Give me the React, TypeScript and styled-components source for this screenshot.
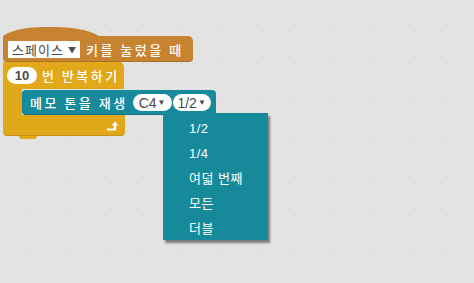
import React from "react";
import styled, { createGlobalStyle } from "styled-components";

const Global = createGlobalStyle`
  html, body { margin: 0; padding: 0; }
  body {
    width: 474px;
    height: 283px;
    overflow: hidden;
    background-color: #e3e3e3;
    background-image: radial-gradient(circle, #d9d9d9 1px, transparent 1.2px);
    background-size: 38px 38px;
    background-position: 10px 6px;
    font-family: "Liberation Sans", "Noto Sans CJK KR", sans-serif;
  }
`;

const Canvas = styled.div`
  position: relative;
  width: 474px;
  height: 283px;
`;

const Script = styled.div`
  display: flex;
  flex-direction: column;
  align-items: flex-start;
  padding: 27px 0 0 3px;
`;

const Label = styled.span`
  color: #fff;
  font-size: 13px;
  letter-spacing: 2.5px;
  white-space: nowrap;
  font-family: "Noto Sans CJK KR", "Liberation Sans", sans-serif;
  font-weight: 500;
`;

const HatWrap = styled.div`
  display: flex;
  flex-direction: column;
  position: relative;
  z-index: 2;
`;

const HatCap = styled.svg`
  display: block;
`;

const HatBody = styled.div`
  width: 190px;
  height: 26px;
  box-sizing: border-box;
  background: #c88330;
  border-radius: 0 5px 4px 4px;
  display: flex;
  align-items: center;
  gap: 6px;
  padding-left: 5px;
  box-shadow: inset 0 -1px 0 rgba(0, 0, 0, 0.15);
`;

const SquareDrop = styled.div`
  background: #fff;
  height: 17px;
  width: 72px;
  box-sizing: border-box;
  display: flex;
  align-items: center;
  justify-content: space-between;
  padding: 0 4px 0 4px;
  color: #4a4a4a;
  font-size: 13px;
  font-family: "Noto Sans CJK KR", sans-serif;
  letter-spacing: 1px;
`;

const Caret = styled.span`
  font-size: 8px;
  color: #4a4a4a;
  letter-spacing: 0;
`;

const Repeat = styled.div`
  display: flex;
  flex-direction: column;
  align-items: flex-start;
  position: relative;
  z-index: 1;
`;

const RepeatHead = styled.div`
  width: 121px;
  height: 27px;
  box-sizing: border-box;
  background: #e1a91a;
  border-radius: 0 5px 0 0;
  display: flex;
  align-items: center;
  gap: 5px;
  padding: 0 0 0 4px;
`;

const NumberOval = styled.div`
  background: #fff;
  height: 17px;
  width: 30px;
  border-radius: 9px;
  display: flex;
  align-items: center;
  justify-content: center;
  color: #4a4a4a;
  font-weight: bold;
  font-size: 13px;
`;

const RepeatMiddle = styled.div`
  display: flex;
  align-items: stretch;
`;

const Arm = styled.div`
  width: 19px;
  height: 26px;
  background: #e1a91a;
`;

const NoteBlock = styled.div`
  width: 194px;
  height: 25px;
  margin-top: 1px;
  box-sizing: border-box;
  background: #178a9b;
  border-radius: 4px;
  display: flex;
  align-items: center;
  padding-left: 8px;
  box-shadow: inset 0 -1px 0 rgba(0, 0, 0, 0.15);
`;

const Pills = styled.div`
  display: flex;
  gap: 1px;
  margin-left: 5px;
`;

const Pill = styled.div<{ $w: number }>`
  background: #fff;
  height: 17px;
  width: ${(p) => p.$w}px;
  border-radius: 9px;
  display: flex;
  align-items: center;
  justify-content: center;
  gap: 1px;
  color: #4a4a4a;
  font-size: 14px;
`;

const RepeatFoot = styled.div`
  width: 122px;
  height: 21px;
  box-sizing: border-box;
  background: #e1a91a;
  border-radius: 0 0 4px 4px;
  display: flex;
  align-items: center;
  justify-content: flex-end;
  padding-right: 6px;
  position: relative;
  box-shadow: inset 0 -1px 0 rgba(0, 0, 0, 0.12);
`;

const Bump = styled.div`
  position: absolute;
  left: 16px;
  bottom: -3px;
  width: 18px;
  height: 3px;
  background: #e1a91a;
  border-radius: 0 0 3px 3px;
`;

const Menu = styled.div`
  position: absolute;
  left: 163px;
  top: 113px;
  width: 105px;
  height: 127px;
  box-sizing: border-box;
  background: #168a9b;
  padding-top: 3px;
  box-shadow: 2px 3px 2px rgba(0, 0, 0, 0.45);
  display: flex;
  flex-direction: column;
  z-index: 5;
`;

const MenuItem = styled.div`
  height: 25px;
  display: flex;
  align-items: center;
  padding-left: 26px;
  color: #fff;
  font-size: 13px;
  font-family: "Liberation Sans", "Noto Sans CJK KR", sans-serif;
  letter-spacing: 0.5px;
`;

const ReturnArrow = () => (
  <svg width="13" height="10" viewBox="0 0 13 10">
    <path d="M1 8.5 H9 V4" stroke="#fff" strokeWidth="2.2" fill="none" />
    <path d="M5.5 4.5 L9 0.5 L12.5 4.5 Z" fill="#fff" />
  </svg>
);

export default function App() {
  const items = ["1/2", "1/4", "여덟 번째", "모든", "더블"];
  return (
    <Canvas>
      <Global />
      <Script>
        <HatWrap>
          <HatCap width="100" height="9" viewBox="0 0 100 9">
            <path d="M0 9 C 12 1, 28 0, 48 0 C 68 0, 84 2, 96 9 Z" fill="#c88330" />
          </HatCap>
          <HatBody>
            <SquareDrop>
              스페이스 <Caret>▼</Caret>
            </SquareDrop>
            <Label>키를 눌렀을 때</Label>
          </HatBody>
        </HatWrap>
        <Repeat>
          <RepeatHead>
            <NumberOval>10</NumberOval>
            <Label>번 반복하기</Label>
          </RepeatHead>
          <RepeatMiddle>
            <Arm />
            <NoteBlock>
              <Label>메모 톤을 재생</Label>
              <Pills>
                <Pill $w={39}>
                  C4<Caret>▼</Caret>
                </Pill>
                <Pill $w={38}>
                  1/2<Caret>▼</Caret>
                </Pill>
              </Pills>
            </NoteBlock>
          </RepeatMiddle>
          <RepeatFoot>
            <ReturnArrow />
            <Bump />
          </RepeatFoot>
        </Repeat>
      </Script>
      <Menu>
        {items.map((t) => (
          <MenuItem key={t}>{t}</MenuItem>
        ))}
      </Menu>
    </Canvas>
  );
}
